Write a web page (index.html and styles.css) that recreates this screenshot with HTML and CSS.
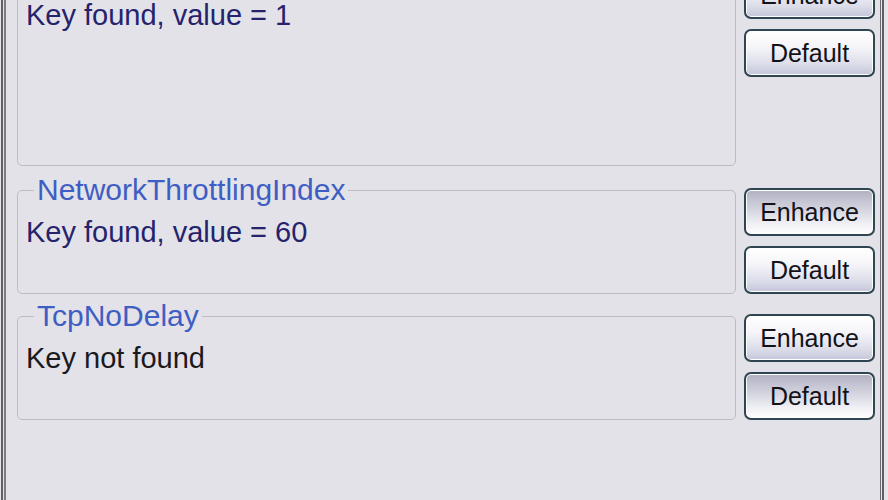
FILE: index.html
```html
<!DOCTYPE html>
<html>
<head>
<meta charset="utf-8">
<link rel="stylesheet" href="styles.css">
</head>
<body>
<div class="frame">
  <div class="client">
    <div class="rows">
      <div class="row row-tall">
        <fieldset class="group group-tall">
          <legend class="caption">TcpAckFrequency</legend>
          <div class="status found">Key found, value = 1</div>
        </fieldset>
        <div class="actions">
          <button class="btn">Enhance</button>
          <button class="btn">Default</button>
        </div>
      </div>
      <div class="row">
        <fieldset class="group">
          <legend class="caption">NetworkThrottlingIndex</legend>
          <div class="status found">Key found, value = 60</div>
        </fieldset>
        <div class="actions">
          <button class="btn btn-hot">Enhance</button>
          <button class="btn">Default</button>
        </div>
      </div>
      <div class="row">
        <fieldset class="group">
          <legend class="caption">TcpNoDelay</legend>
          <div class="status missing">Key not found</div>
        </fieldset>
        <div class="actions">
          <button class="btn">Enhance</button>
          <button class="btn btn-hot">Default</button>
        </div>
      </div>
    </div>
  </div>
</div>
</body>
</html>
```
FILE: styles.css
```css
html, body {
  margin: 0;
  padding: 0;
  height: 100%;
  overflow: hidden;
  background: #e4e4e9;
}

.frame {
  height: 100%;
  margin: 0 4px 0 1px;
  padding: 0 1px;
  border-left: 2px solid #5e5e69;
  border-right: 2px solid #5e5e69;
  box-sizing: border-box;
}

.client {
  height: 100%;
  box-sizing: border-box;
  border-left: 2px solid #7b7b86;
  border-right: 1px solid #6a6a75;
  background: #e3e2e8;
  padding: 0 5px 0 11px;
  overflow: hidden;
}

.rows {
  display: flex;
  flex-direction: column;
  gap: 7px;
  margin-top: -42px;
}

.row {
  display: flex;
  align-items: flex-start;
  gap: 8px;
}

.row-tall {
  margin-bottom: 2px;
}

.group {
  width: 720px;
  box-sizing: border-box;
  margin: 0;
  padding: 12px 8px 46px 8px;
  min-width: 0;
  border: 1px solid #bcbcc2;
  border-radius: 5px;
}

.group-tall {
  padding-bottom: 135px;
}

.caption {
  margin-left: 8px;
  padding: 0 3px;
  font-family: "Liberation Sans", Arial, sans-serif;
  font-size: 30px;
  line-height: 30px;
  color: #3f5ec3;
}

.status {
  font-family: "Liberation Sans", Arial, sans-serif;
  font-size: 29px;
  line-height: 30px;
  white-space: nowrap;
}

.found {
  color: #25236c;
}

.missing {
  color: #1a1a1e;
}

.actions {
  display: flex;
  flex-direction: column;
  gap: 10px;
  padding-top: 13px;
  width: 131px;
}

.btn {
  width: 131px;
  height: 48px;
  box-sizing: border-box;
  margin: 0;
  padding: 0;
  border: 2px solid #2f4552;
  border-radius: 7px;
  background: linear-gradient(to bottom, #ffffff 0%, #f6f6fa 35%, #dcdde9 75%, #c4c6da 100%);
  box-shadow: inset 0 0 0 1px #ffffff;
  font-family: "Liberation Sans", Arial, sans-serif;
  font-size: 25px;
  line-height: 1;
  color: #121218;
}

.btn-hot {
  background: linear-gradient(to bottom, #b0b0c3 0%, #cdcdda 35%, #eeeef4 75%, #ffffff 100%);
}
```
